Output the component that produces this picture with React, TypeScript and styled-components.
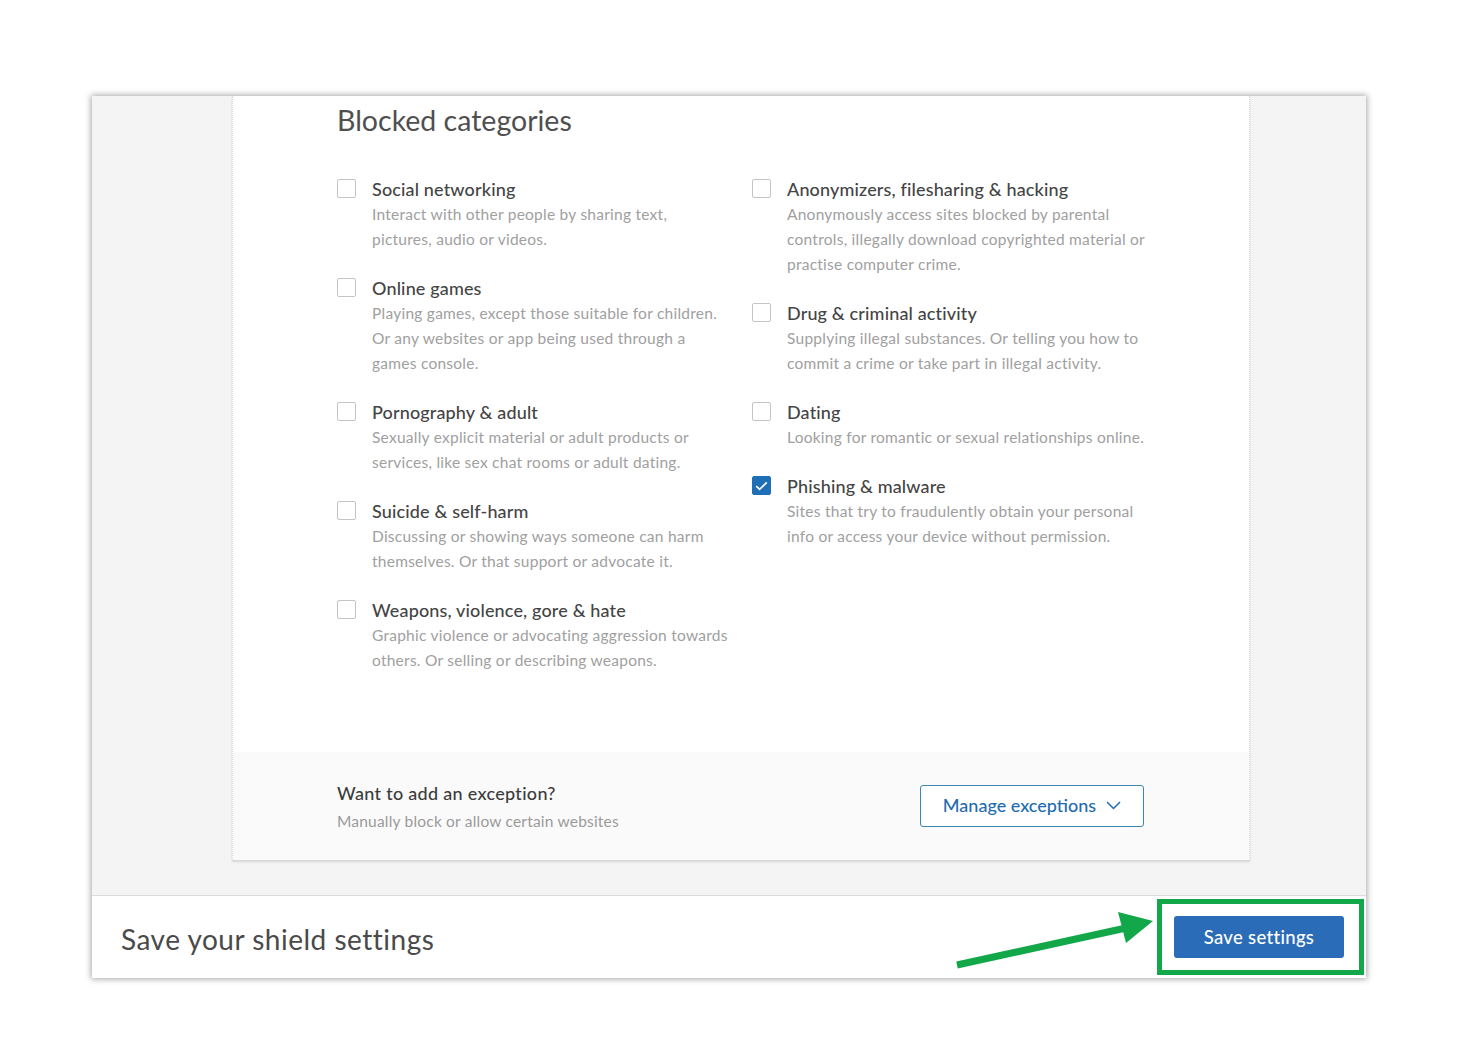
import styled, { createGlobalStyle } from "styled-components";

const GlobalStyle = createGlobalStyle`
  html, body {
    margin: 0;
    padding: 0;
    background: #ffffff;
    font-family: Lato, "Open Sans", "Liberation Sans", sans-serif;
  }
  * { box-sizing: border-box; }
`;

interface Category {
  title: string;
  lines: string[];
  checked?: boolean;
}

const leftColumn: Category[] = [
  {
    title: "Social networking",
    lines: ["Interact with other people by sharing text,", "pictures, audio or videos."],
  },
  {
    title: "Online games",
    lines: [
      "Playing games, except those suitable for children.",
      "Or any websites or app being used through a",
      "games console.",
    ],
  },
  {
    title: "Pornography & adult",
    lines: ["Sexually explicit material or adult products or", "services, like sex chat rooms or adult dating."],
  },
  {
    title: "Suicide & self-harm",
    lines: ["Discussing or showing ways someone can harm", "themselves. Or that support or advocate it."],
  },
  {
    title: "Weapons, violence, gore & hate",
    lines: ["Graphic violence or advocating aggression towards", "others. Or selling or describing weapons."],
  },
];

const rightColumn: Category[] = [
  {
    title: "Anonymizers, filesharing & hacking",
    lines: [
      "Anonymously access sites blocked by parental",
      "controls, illegally download copyrighted material or",
      "practise computer crime.",
    ],
  },
  {
    title: "Drug & criminal activity",
    lines: ["Supplying illegal substances. Or telling you how to", "commit a crime or take part in illegal activity."],
  },
  {
    title: "Dating",
    lines: ["Looking for romantic or sexual relationships online."],
  },
  {
    title: "Phishing & malware",
    lines: ["Sites that try to fraudulently obtain your personal", "info or access your device without permission."],
    checked: true,
  },
];

const CategoryItem = ({ item }: { item: Category }) => (
  <Item>
    <Checkbox $checked={!!item.checked}>
      {item.checked && (
        <svg width="13" height="10" viewBox="0 0 13 10" fill="none">
          <path d="M1.2 5.2 L4.6 8.4 L11.8 1.4" stroke="#fff" strokeWidth="1.7" />
        </svg>
      )}
    </Checkbox>
    <ItemText>
      <ItemTitle>{item.title}</ItemTitle>
      {item.lines.map((line) => (
        <ItemLine key={line}>{line}</ItemLine>
      ))}
    </ItemText>
  </Item>
);

export default function App() {
  return (
    <>
      <GlobalStyle />
      <Page>
        <Frame>
          <Backdrop>
            <Card>
              <CardBody>
                <Heading>Blocked categories</Heading>
                <Columns>
                  <Column>
                    {leftColumn.map((c) => (
                      <CategoryItem key={c.title} item={c} />
                    ))}
                  </Column>
                  <Column>
                    {rightColumn.map((c) => (
                      <CategoryItem key={c.title} item={c} />
                    ))}
                  </Column>
                </Columns>
              </CardBody>
              <CardFooter>
                <div>
                  <FooterTitle>Want to add an exception?</FooterTitle>
                  <FooterText>Manually block or allow certain websites</FooterText>
                </div>
                <OutlineButton>
                  Manage exceptions
                  <svg width="15" height="9" viewBox="0 0 15 9" fill="none">
                    <path d="M1 1 L7.5 7.5 L14 1" stroke="#1f6db0" strokeWidth="1.5" />
                  </svg>
                </OutlineButton>
              </CardFooter>
            </Card>
          </Backdrop>
          <SaveBar>
            <SaveTitle>Save your shield settings</SaveTitle>
            <Highlight>
              <PrimaryButton>Save settings</PrimaryButton>
            </Highlight>
          </SaveBar>
        </Frame>
        <Arrow width="1458" height="1042" viewBox="0 0 1458 1042">
          <line x1="957" y1="965" x2="1126" y2="928" stroke="#12a84a" strokeWidth="7" />
          <polygon points="1153,921 1118,912 1126,943" fill="#12a84a" />
        </Arrow>
      </Page>
    </>
  );
}

const Page = styled.div`
  position: relative;
  width: 1458px;
  height: 1042px;
  padding: 96px 0 0 92px;
  background: #ffffff;
`;

const Frame = styled.div`
  width: 1274px;
  height: 882px;
  display: flex;
  flex-direction: column;
  background: #f4f4f4;
  box-shadow: 0 0 6px 1px rgba(0, 0, 0, 0.35);
`;

const Backdrop = styled.div`
  display: flex;
  padding: 0 116px 35px 140px;
`;

const Card = styled.div`
  width: 1018px;
  background: #ffffff;
  border-left: 1px dotted #d8d8d8;
  border-right: 1px dotted #d8d8d8;
  box-shadow: 0 2px 2px rgba(0, 0, 0, 0.12);
`;

const CardBody = styled.div`
  padding: 6px 105px 79px 104px;
`;

const Heading = styled.h2`
  margin: 0 0 38px;
  font-size: 28.5px;
  line-height: 36px;
  font-weight: 400;
  color: #4f4f4f;
`;

const Columns = styled.div`
  display: grid;
  grid-template-columns: 415px 1fr;
`;

const Column = styled.div`
  display: flex;
  flex-direction: column;
  gap: 23px;
`;

const Item = styled.div`
  display: flex;
  align-items: flex-start;
  gap: 16px;
`;

const Checkbox = styled.span<{ $checked: boolean }>`
  flex: none;
  width: 19px;
  height: 19px;
  margin-top: 3px;
  border-radius: 2px;
  display: flex;
  align-items: center;
  justify-content: center;
  border: 1px solid ${(p) => (p.$checked ? "#1f6fb6" : "#c4c4c4")};
  background: ${(p) => (p.$checked ? "#1f6fb6" : "#ffffff")};
`;

const ItemText = styled.div`
  display: flex;
  flex-direction: column;
`;

const ItemTitle = styled.div`
  font-size: 18px;
  line-height: 26px;
  font-weight: 500;
  letter-spacing: 0.15px;
  color: #444444;
`;

const ItemLine = styled.div`
  font-size: 15.5px;
  line-height: 25px;
  font-weight: 400;
  letter-spacing: 0.25px;
  color: #a0a0a0;
  white-space: nowrap;
`;

const CardFooter = styled.div`
  height: 108px;
  display: flex;
  align-items: center;
  justify-content: space-between;
  padding: 0 105px 0 104px;
  background: #fafafa;
`;

const FooterTitle = styled.div`
  font-size: 18px;
  line-height: 24px;
  font-weight: 500;
  letter-spacing: 0.3px;
  color: #3c3c3c;
`;

const FooterText = styled.div`
  margin-top: 5px;
  font-size: 15.5px;
  line-height: 22px;
  letter-spacing: 0.2px;
  color: #9a9a9a;
`;

const OutlineButton = styled.button`
  width: 224px;
  height: 42px;
  display: flex;
  align-items: center;
  justify-content: center;
  gap: 10px;
  background: #ffffff;
  border: 1px solid #3b87b1;
  border-radius: 3px;
  font-family: inherit;
  font-size: 18px;
  font-weight: 500;
  color: #1f6db0;
  padding: 0 0 2px;
`;

const SaveBar = styled.div`
  flex: 1;
  display: flex;
  align-items: center;
  justify-content: space-between;
  padding: 0 2px 0 29px;
  background: #ffffff;
  border-top: 1px solid #dcdcdc;
`;

const SaveTitle = styled.div`
  font-size: 28px;
  font-weight: 400;
  letter-spacing: 0.5px;
  color: #4a4a4a;
  padding-top: 4px;
`;

const Highlight = styled.div`
  border: 5px solid #12a84a;
  padding: 12px 15px 12px 12px;
`;

const PrimaryButton = styled.button`
  width: 170px;
  height: 42px;
  border: none;
  border-radius: 3px;
  background: #2b6cb9;
  color: #ffffff;
  font-family: inherit;
  font-size: 18.5px;
  font-weight: 500;
  letter-spacing: 0.3px;
`;

const Arrow = styled.svg`
  position: absolute;
  left: 0;
  top: 0;
  pointer-events: none;
`;
